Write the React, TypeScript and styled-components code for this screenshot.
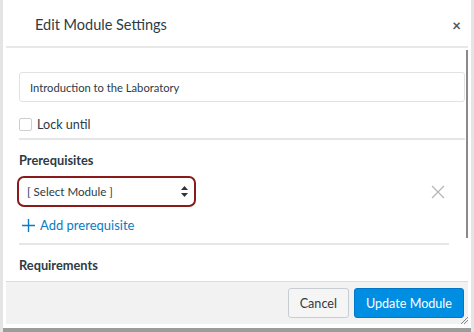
import React from "react";
import styled, { createGlobalStyle } from "styled-components";

const Global = createGlobalStyle`
  html, body { margin: 0; padding: 0; background: #e4e4e4; }
  body { font-family: Lato, "Open Sans", sans-serif; color: #2d3b45; }
  * { box-sizing: border-box; }
`;

const Page = styled.div`
  width: 474px;
  height: 332px;
  padding-left: 3px;
  overflow: hidden;
`;

const Dialog = styled.div`
  width: 468px;
  height: 328px;
  background: #fff;
  padding: 0 3px 4px 3px;
  display: flex;
  flex-direction: column;
  box-shadow: 0 4px 0 #9c9c9c;
`;

const Header = styled.div`
  height: 48px;
  flex: none;
  display: flex;
  align-items: center;
  justify-content: space-between;
  padding: 3px 7px 0 29px;
  border-bottom: 2px solid #e8e8e8;
`;

const Title = styled.h2`
  margin: 0;
  font-size: 14.5px;
  font-weight: 400;
  color: #2d3b45;
`;

const Close = styled.span`
  font-size: 15px;
  font-weight: 700;
  color: #555;
  line-height: 1;
  margin-top: 2px;
`;

const Body = styled.div`
  position: relative;
  flex: 1;
  overflow: hidden;
  padding: 24px 0 0 13px;
`;

const ScrollThumb = styled.div`
  position: absolute;
  right: 0;
  top: 2px;
  width: 2px;
  height: 188px;
  background: #8a8a8a;
`;

const TextInput = styled.div`
  width: 446px;
  height: 30px;
  border: 1px solid #e2e2e2;
  border-radius: 3px;
  display: flex;
  align-items: center;
  padding-left: 10px;
  font-size: 11.2px;
  color: #2d3b45;
`;

const CheckRow = styled.label`
  display: flex;
  align-items: center;
  gap: 5px;
  height: 20px;
  margin-top: 12px;
  font-size: 12.6px;
`;

const Box = styled.span`
  width: 13px;
  height: 13px;
  border: 1px solid #cfcfcf;
  border-radius: 2px;
  background: #fff;
`;

const Divider = styled.div<{ $w: number; $top: number }>`
  width: ${(p) => p.$w}px;
  height: 2px;
  background: #e6e6e6;
  margin-top: ${(p) => p.$top}px;
`;

const SectionTitle = styled.div<{ $top: number }>`
  font-size: 12.8px;
  font-weight: 700;
  margin-top: ${(p) => p.$top}px;
  line-height: 18px;
`;

const SelectRow = styled.div`
  display: flex;
  align-items: center;
  margin-top: 7px;
  margin-left: -2px;
`;

const Select = styled.div`
  width: 179px;
  height: 31px;
  border: 2.5px solid #8b1a1a;
  border-radius: 7px;
  display: flex;
  align-items: center;
  justify-content: space-between;
  padding: 0 6px 0 8px;
  font-size: 11.6px;
  color: #2d3b45;
`;

const Remove = styled.span`
  margin-left: 235px;
  display: flex;
  color: #b8b8b8;
`;

const AddLink = styled.div`
  display: flex;
  align-items: center;
  gap: 5px;
  margin-top: 9px;
  margin-left: 3px;
  color: #0a7bc4;
  font-size: 13px;
  height: 18px;
`;

const Footer = styled.div`
  height: 43px;
  flex: none;
  background: #f2f2f2;
  border-top: 1px solid #dcdcdc;
  display: flex;
  align-items: center;
  justify-content: flex-end;
  gap: 5px;
  padding-right: 4px;
  position: relative;
`;

const Button = styled.button<{ $primary?: boolean }>`
  height: 30px;
  border-radius: 3px;
  font-family: Lato, sans-serif;
  font-size: 12.6px;
  padding: 0 11px;
  border: 1px solid ${(p) => (p.$primary ? "#0077c8" : "#c7cdd1")};
  background: ${(p) => (p.$primary ? "#008ee2" : "#f5f5f5")};
  color: ${(p) => (p.$primary ? "#fff" : "#2d3b45")};
`;

const Grip = styled.svg`
  position: absolute;
  right: 0;
  bottom: 0;
`;

export default function App() {
  return (
    <>
      <Global />
      <Page>
        <Dialog>
          <Header>
            <Title>Edit Module Settings</Title>
            <Close>×</Close>
          </Header>
          <Body>
            <ScrollThumb />
            <TextInput>Introduction to the Laboratory</TextInput>
            <CheckRow>
              <Box />
              Lock until
            </CheckRow>
            <Divider $w={446} $top={4} />
            <SectionTitle $top={11}>Prerequisites</SectionTitle>
            <SelectRow>
              <Select>
                <span>[ Select Module ]</span>
                <svg width="7" height="11" viewBox="0 0 7 11">
                  <path d="M3.5 0 L7 4 H0 Z M0 7 H7 L3.5 11 Z" fill="#333" />
                </svg>
              </Select>
              <Remove>
                <svg width="14" height="14" viewBox="0 0 14 14">
                  <path d="M1 1 L13 13 M13 1 L1 13" stroke="#b5b5b5" strokeWidth="1.2" />
                </svg>
              </Remove>
            </SelectRow>
            <AddLink>
              <svg width="13" height="13" viewBox="0 0 13 13">
                <path d="M6.5 0 V13 M0 6.5 H13" stroke="#0a7bc4" strokeWidth="1.4" />
              </svg>
              Add prerequisite
            </AddLink>
            <Divider $w={430} $top={9} />
            <SectionTitle $top={11}>Requirements</SectionTitle>
          </Body>
          <Footer>
            <Button>Cancel</Button>
            <Button $primary>Update Module</Button>
            <Grip width="8" height="8" viewBox="0 0 8 8">
              <path d="M1 8 L8 1 M4 8 L8 4" stroke="#888" strokeWidth="1" />
            </Grip>
          </Footer>
        </Dialog>
      </Page>
    </>
  );
}
